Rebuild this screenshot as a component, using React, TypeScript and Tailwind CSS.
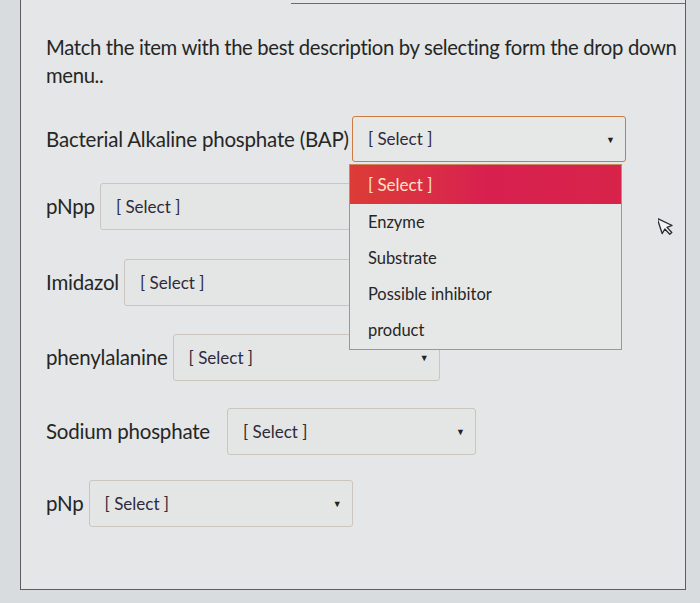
import React from "react";

const font = { fontFamily: "Lato, 'Open Sans', sans-serif" };

function Caret() {
  return <span className="text-[9px] leading-none text-[#222]">▼</span>;
}

function SelectBox({ w, focused = false }: { w: string; focused?: boolean }) {
  return (
    <div
      className={
        focused
          ? `relative flex h-[46px] shrink-0 items-center justify-between rounded-[3px] border-[1.5px] border-[#cf7a3e] bg-[#e6e8e8] pl-[15px] pr-[10px] ${w}`
          : `relative flex h-[47px] shrink-0 items-center justify-between rounded-[3px] border border-[#cbc5bf] bg-[#e4e6e6] pl-[15px] pr-[10px] ${w}`
      }
    >
      <span className="text-[17px] text-[#2f2a3a]">[ Select ]</span>
      <Caret />
    </div>
  );
}

function Row({
  label,
  w,
  gap,
  mt,
  children,
}: {
  label: string;
  w: string;
  gap: string;
  mt: string;
  children?: React.ReactNode;
}) {
  return (
    <div className={`flex items-center ${gap} ${mt}`}>
      <span className="whitespace-nowrap text-[20.5px] tracking-[-0.2px] text-[#262626]">{label}</span>
      <div className="relative">
        <SelectBox w={w} focused={!!children} />
        {children}
      </div>
    </div>
  );
}

const options = ["Enzyme", "Substrate", "Possible inhibitor", "product"];

function OptionList() {
  return (
    <div className="absolute left-[-3px] top-[48px] z-10 w-[273px] border border-[#c98a5e] bg-[#e6e8e8]">
      <div className="flex h-[39px] items-center bg-linear-to-r from-[#dc3b36] via-[#d8204f] to-[#d7234a] pl-[18px] text-[17px] text-[#ffe2c6]">
        [ Select ]
      </div>
      {options.map((o) => (
        <div key={o} className="flex h-[36px] items-center pl-[18px] text-[16.5px] text-[#262626]">
          {o}
        </div>
      ))}
      <div className="h-[1px]" />
    </div>
  );
}

function Pointer() {
  return (
    <svg
      className="absolute left-[658px] top-[214px]"
      width="18"
      height="24"
      viewBox="0 0 18 24"
    >
      <path
        d="M2 2 L2 18 L6 14.5 L9 21 L11.5 20 L8.6 13.6 L14 13.4 Z"
        fill="#f2f3f4"
        stroke="#2a2a33"
        strokeWidth="1.3"
        strokeLinejoin="round"
        transform="rotate(-18 8 12)"
      />
    </svg>
  );
}

export default function App() {
  return (
    <div className="relative h-[603px] w-[700px] overflow-hidden bg-[#d8dcde]" style={font}>
      <div className="ml-[20px] h-[590px] w-[666px] border-x border-b border-[#5c5c62] bg-[#e4e6e7]">
        <div className="ml-[270px] h-[4px] border-b border-[#6a6a70]" />
        <div className="pl-[25px] pt-[29px]">
          <p className="whitespace-nowrap text-[20.3px] leading-[28px] tracking-[-0.35px] text-[#262626]">
            Match the item with the best description by selecting form the drop down
            <br />
            menu..
          </p>
          <div className="flex flex-col">
            <Row label="Bacterial Alkaline phosphate (BAP)" w="w-[274px]" gap="gap-[3px]" mt="mt-[27px]">
              <OptionList />
            </Row>
            <Row label="pNpp" w="w-[272px]" gap="gap-[5px]" mt="mt-[21px]" />
            <Row label="Imidazol" w="w-[272px]" gap="gap-[5px]" mt="mt-[29px]" />
            <Row label="phenylalanine" w="w-[267px]" gap="gap-[5px]" mt="mt-[28px]" />
            <Row label="Sodium phosphate" w="w-[249px]" gap="gap-[17px]" mt="mt-[27px]" />
            <Row label="pNp" w="w-[264px]" gap="gap-[5px]" mt="mt-[25px]" />
          </div>
        </div>
      </div>
      <Pointer />
    </div>
  );
}
